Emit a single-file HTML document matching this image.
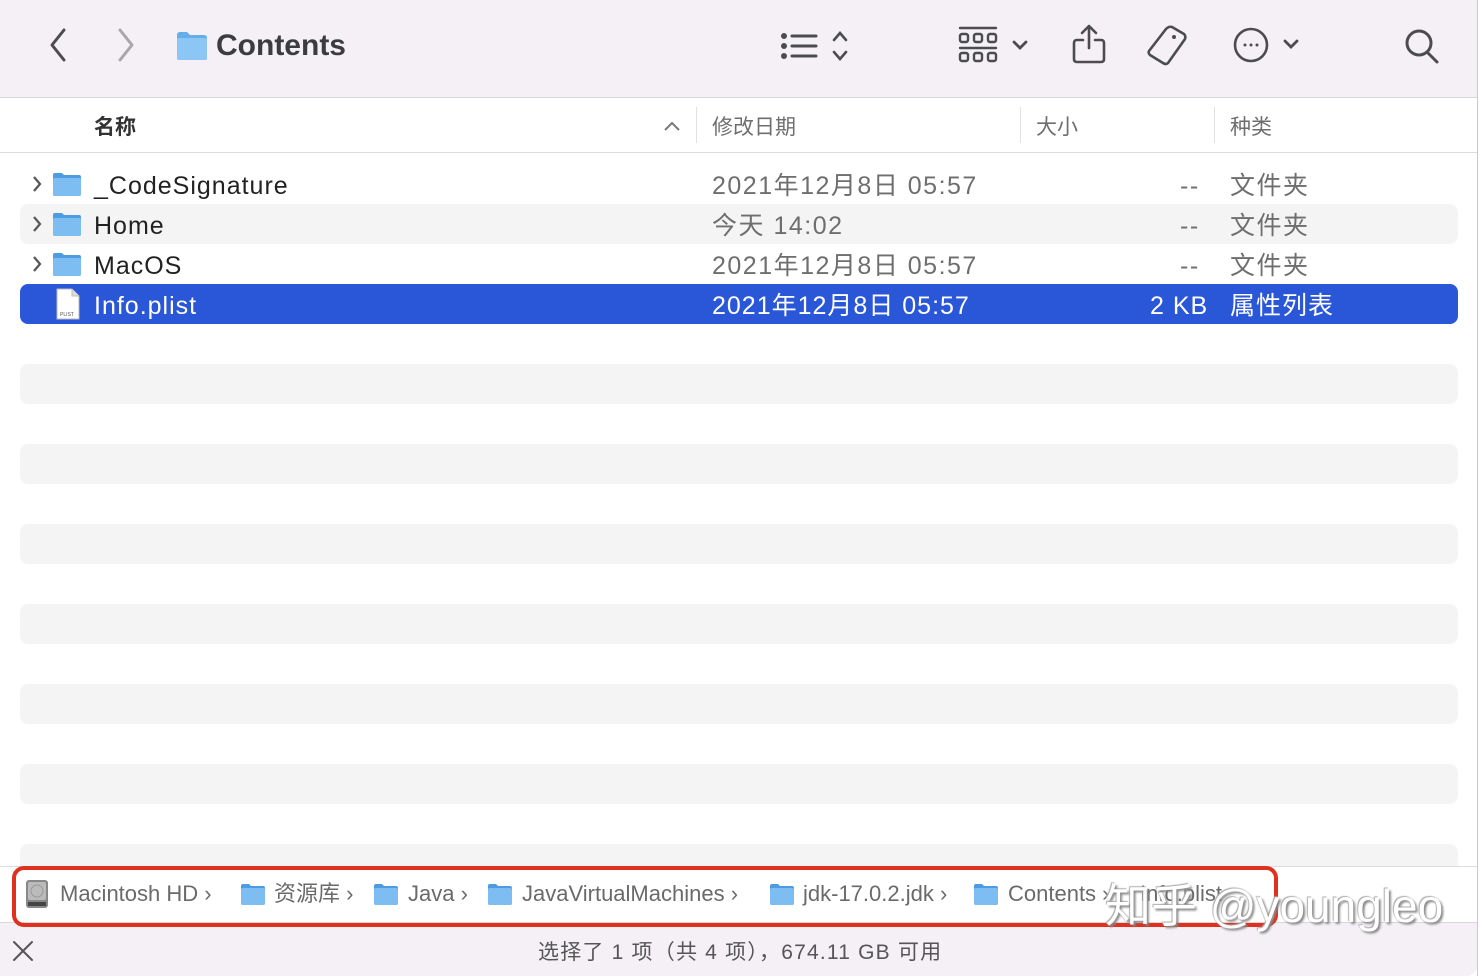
<!DOCTYPE html>
<html><head><meta charset="utf-8"><style>
*{margin:0;padding:0;box-sizing:border-box}
body{width:1480px;height:976px;background:#fff;font-family:"Liberation Sans","Noto Sans CJK SC",sans-serif;position:relative;overflow:hidden}
.a{position:absolute}
.tb{left:0;top:0;width:1478px;height:98px;background:#f4f0f6;border-bottom:1px solid #d8d6da}
.hdr{left:0;top:99px;width:1478px;height:54px;background:#fff;border-bottom:1px solid #dcdcdc}
.hdr span{position:absolute;top:12px;font-size:21px;color:#6e6e6e}
.sep{position:absolute;top:8px;width:1px;height:36px;background:#e2e2e2}
.row{position:absolute;left:20px;width:1438px;height:40px;border-radius:8px}
.g{background:#f4f4f4}
.sel{background:#2a56d8;color:#fff}
.t{position:absolute;top:2px;font-size:25px;line-height:40px;white-space:nowrap;letter-spacing:1px}
.t.dt,.sel .t{letter-spacing:1.5px}
.nm{color:#222}
.dt{color:#6e6e6e}
.sel .t{color:#fff}
.fold{position:absolute;width:30px;height:24px;top:8px}
.pb{left:0;top:866px;width:1478px;height:56px;background:#fff;border-top:1px solid #dcdcdc}
.st{left:0;top:922px;width:1478px;height:54px;background:#f4f0f6;border-top:1px solid #d8d6da;border-bottom-right-radius:12px}
.p{position:absolute;top:880px;font-size:22px;color:#6a6a6a;white-space:nowrap;line-height:28px}
.edge{left:1477px;top:0;width:3px;height:976px;background:#fff;border-left:1px solid #c9c9c9}
</style></head><body>
<div class="a tb"></div>
<svg class="a" style="left:40px;top:26px" width="40" height="40"><path d="M24 4L12 19L24 34" fill="none" stroke="#4b4b50" stroke-width="3" stroke-linecap="round" stroke-linejoin="round"/></svg>
<svg class="a" style="left:110px;top:26px" width="40" height="40"><path d="M10 4L22 19L10 34" fill="none" stroke="#a8a6ab" stroke-width="3" stroke-linecap="round" stroke-linejoin="round"/></svg>
<svg class="a" style="left:176px;top:31px" width="32" height="30"><path d="M1 4Q1 1 4 1H11L14 4H28Q31 4 31 7V27Q31 29 28 29H4Q1 29 1 27Z" fill="#65aeea"/><rect x="1" y="7" width="30" height="22" rx="2" fill="#8cc6f4"/></svg>
<div class="a" style="left:216px;top:29px;font-size:30px;font-weight:bold;color:#3c3c40">Contents</div>
<svg class="a" style="left:778px;top:28px" width="80" height="36" fill="none" stroke="#4b4b50" stroke-width="3" stroke-linecap="round"><circle cx="6" cy="8" r="1.5" fill="#4b4b50"/><circle cx="6" cy="18" r="1.5" fill="#4b4b50"/><circle cx="6" cy="28" r="1.5" fill="#4b4b50"/><path d="M14 8H38M14 18H38M14 28H38"/><path d="M56 12L62 5L68 12M56 24L62 31L68 24" stroke-width="2.6"/></svg>
<svg class="a" style="left:956px;top:24px" width="80" height="42" fill="none" stroke="#4b4b50" stroke-width="2.4" stroke-linecap="round"><path d="M4 4H40M4 24H40"/><rect x="4" y="10" width="8" height="8" rx="2"/><rect x="18" y="10" width="8" height="8" rx="2"/><rect x="32" y="10" width="8" height="8" rx="2"/><rect x="4" y="29" width="8" height="8" rx="2"/><rect x="18" y="29" width="8" height="8" rx="2"/><rect x="32" y="29" width="8" height="8" rx="2"/><path d="M58 18L64 24L70 18" stroke-width="2.8"/></svg>
<svg class="a" style="left:1070px;top:22px" width="40" height="44" fill="none" stroke="#4b4b50" stroke-width="2.6" stroke-linecap="round" stroke-linejoin="round"><path d="M19 4V26M12 11L19 4L26 11"/><path d="M13 18H7Q4 18 4 21V37Q4 40 7 40H31Q34 40 34 37V21Q34 18 31 18H25"/></svg>
<svg class="a" style="left:1144px;top:24px" width="46" height="44" fill="none" stroke="#4b4b50" stroke-width="2.6" stroke-linejoin="round"><path d="M28 3L40 10Q42 12 41 15L24 39Q22 41 19 39L6 31Q4 29 5 27L22 5Q25 2 28 3Z"/><circle cx="30" cy="13" r="2" fill="#4b4b50" stroke="none"/></svg>
<svg class="a" style="left:1232px;top:26px" width="72" height="40" fill="none" stroke="#4b4b50" stroke-width="2.6" stroke-linecap="round"><circle cx="19" cy="19" r="16"/><circle cx="13" cy="19" r="1.5" fill="#4b4b50" stroke="none"/><circle cx="19" cy="19" r="1.5" fill="#4b4b50" stroke="none"/><circle cx="25" cy="19" r="1.5" fill="#4b4b50" stroke="none"/><path d="M53 15L59 21L65 15" stroke-width="2.8"/></svg>
<svg class="a" style="left:1402px;top:26px" width="42" height="40" fill="none" stroke="#4b4b50" stroke-width="3" stroke-linecap="round"><circle cx="17" cy="17" r="12"/><path d="M26 27L35 36"/></svg>

<div class="a hdr">
<span style="left:94px;font-weight:bold;color:#333">名称</span>
<svg style="position:absolute;left:662px;top:20px" width="20" height="14"><path d="M3 11L10 4L17 11" fill="none" stroke="#777" stroke-width="2"/></svg>
<div class="sep" style="left:696px"></div>
<span style="left:712px">修改日期</span>
<div class="sep" style="left:1020px"></div>
<span style="left:1036px">大小</span>
<div class="sep" style="left:1214px"></div>
<span style="left:1230px">种类</span>
</div>

<div class="row" style="top:164px"></div>
<div class="row g" style="top:204px"></div>
<div class="row sel" style="top:284px"></div>
<div class="row g" style="top:364px"></div>
<div class="row g" style="top:444px"></div>
<div class="row g" style="top:524px"></div>
<div class="row g" style="top:604px"></div>
<div class="row g" style="top:684px"></div>
<div class="row g" style="top:764px"></div>
<div class="row g" style="top:844px"></div>

<div class="a" style="left:0;top:164px;width:1480px;height:40px">
<svg class="a" style="left:30px;top:10px" width="14" height="20"><path d="M4 3L10 10L4 17" fill="none" stroke="#555" stroke-width="2.2"/></svg>
<svg class="fold" style="left:52px"><path d="M1 3Q1 1 3 1H10L12 3H27Q29 3 29 5V22Q29 24 27 24H3Q1 24 1 22Z" fill="#4d9be0"/><rect x="1" y="6" width="28" height="18" rx="2" fill="#7dbdf2"/></svg>
<div class="t nm" style="left:94px">_CodeSignature</div>
<div class="t dt" style="left:712px">2021年12月8日 05:57</div>
<div class="t dt" style="left:1180px">--</div>
<div class="t dt" style="left:1230px">文件夹</div></div>
<div class="a" style="left:0;top:204px;width:1480px;height:40px">
<svg class="a" style="left:30px;top:10px" width="14" height="20"><path d="M4 3L10 10L4 17" fill="none" stroke="#555" stroke-width="2.2"/></svg>
<svg class="fold" style="left:52px"><path d="M1 3Q1 1 3 1H10L12 3H27Q29 3 29 5V22Q29 24 27 24H3Q1 24 1 22Z" fill="#4d9be0"/><rect x="1" y="6" width="28" height="18" rx="2" fill="#7dbdf2"/></svg>
<div class="t nm" style="left:94px">Home</div>
<div class="t dt" style="left:712px">今天 14:02</div>
<div class="t dt" style="left:1180px">--</div>
<div class="t dt" style="left:1230px">文件夹</div></div>
<div class="a" style="left:0;top:244px;width:1480px;height:40px">
<svg class="a" style="left:30px;top:10px" width="14" height="20"><path d="M4 3L10 10L4 17" fill="none" stroke="#555" stroke-width="2.2"/></svg>
<svg class="fold" style="left:52px"><path d="M1 3Q1 1 3 1H10L12 3H27Q29 3 29 5V22Q29 24 27 24H3Q1 24 1 22Z" fill="#4d9be0"/><rect x="1" y="6" width="28" height="18" rx="2" fill="#7dbdf2"/></svg>
<div class="t nm" style="left:94px">MacOS</div>
<div class="t dt" style="left:712px">2021年12月8日 05:57</div>
<div class="t dt" style="left:1180px">--</div>
<div class="t dt" style="left:1230px">文件夹</div></div>
<div class="a" style="left:0;top:284px;width:1480px;height:40px;color:#fff">
<svg class="a" style="left:55px;top:4px" width="26" height="32"><path d="M2 1H17L24 8V31H2Z" fill="#fff" stroke="#bbb"/><path d="M17 1V8H24" fill="#ddd" stroke="#bbb"/><text x="5" y="28" font-size="5" fill="#555" font-family="Liberation Sans">PLIST</text></svg>
<div class="t" style="left:94px;color:#fff">Info.plist</div>
<div class="t" style="left:712px;color:#fff">2021年12月8日 05:57</div>
<div class="t" style="left:1150px;color:#fff">2 KB</div>
<div class="t" style="left:1230px;color:#fff">属性列表</div></div>

<div class="a pb"></div>
<div class="a st"></div>
<svg class="a" style="left:24px;top:879px" width="28" height="30"><rect x="2" y="1" width="22" height="28" rx="3" fill="#888"/><rect x="4" y="3" width="18" height="18" rx="2" fill="#bbb"/><circle cx="13" cy="12" r="6" fill="none" stroke="#999"/><rect x="4" y="23" width="18" height="4" fill="#444"/></svg>
<div class="p" style="left:60px">Macintosh HD ›</div>
<svg class="a" style="left:240px;top:883px" width="26" height="22"><path d="M1 3Q1 1 3 1H9L11 3H23Q25 3 25 5V20Q25 22 23 22H3Q1 22 1 20Z" fill="#4d9be0"/><rect x="1" y="5" width="24" height="17" rx="2" fill="#7dbdf2"/></svg>
<div class="p" style="left:274px">资源库 ›</div>
<svg class="a" style="left:373px;top:883px" width="26" height="22"><path d="M1 3Q1 1 3 1H9L11 3H23Q25 3 25 5V20Q25 22 23 22H3Q1 22 1 20Z" fill="#4d9be0"/><rect x="1" y="5" width="24" height="17" rx="2" fill="#7dbdf2"/></svg>
<div class="p" style="left:408px">Java ›</div>
<svg class="a" style="left:487px;top:883px" width="26" height="22"><path d="M1 3Q1 1 3 1H9L11 3H23Q25 3 25 5V20Q25 22 23 22H3Q1 22 1 20Z" fill="#4d9be0"/><rect x="1" y="5" width="24" height="17" rx="2" fill="#7dbdf2"/></svg>
<div class="p" style="left:522px">JavaVirtualMachines ›</div>
<svg class="a" style="left:769px;top:883px" width="26" height="22"><path d="M1 3Q1 1 3 1H9L11 3H23Q25 3 25 5V20Q25 22 23 22H3Q1 22 1 20Z" fill="#4d9be0"/><rect x="1" y="5" width="24" height="17" rx="2" fill="#7dbdf2"/></svg>
<div class="p" style="left:803px">jdk-17.0.2.jdk ›</div>
<svg class="a" style="left:973px;top:883px" width="26" height="22"><path d="M1 3Q1 1 3 1H9L11 3H23Q25 3 25 5V20Q25 22 23 22H3Q1 22 1 20Z" fill="#4d9be0"/><rect x="1" y="5" width="24" height="17" rx="2" fill="#7dbdf2"/></svg>
<div class="p" style="left:1008px">Contents › &nbsp; &nbsp; Info.plist</div>
<div class="a" style="left:12px;top:866px;width:1266px;height:61px;border:4px solid #e0301e;border-radius:12px"></div>
<div class="a" style="left:1105px;top:878px;font-size:46px;color:#fff;text-shadow:2px 2px 2px #888,-1px -1px 1px #aaa;white-space:nowrap;line-height:56px">知乎 @youngleo</div>
<svg class="a" style="left:10px;top:938px" width="26" height="26" fill="none" stroke="#555" stroke-width="2" stroke-linecap="round"><path d="M4 4L22 22M22 4L4 22"/></svg>
<div class="a" style="left:538px;top:936px;font-size:21px;color:#555;white-space:nowrap;letter-spacing:1.2px">选择了 1 项（共 4 项），674.11 GB 可用</div>
<div class="a edge"></div>
</body></html>
